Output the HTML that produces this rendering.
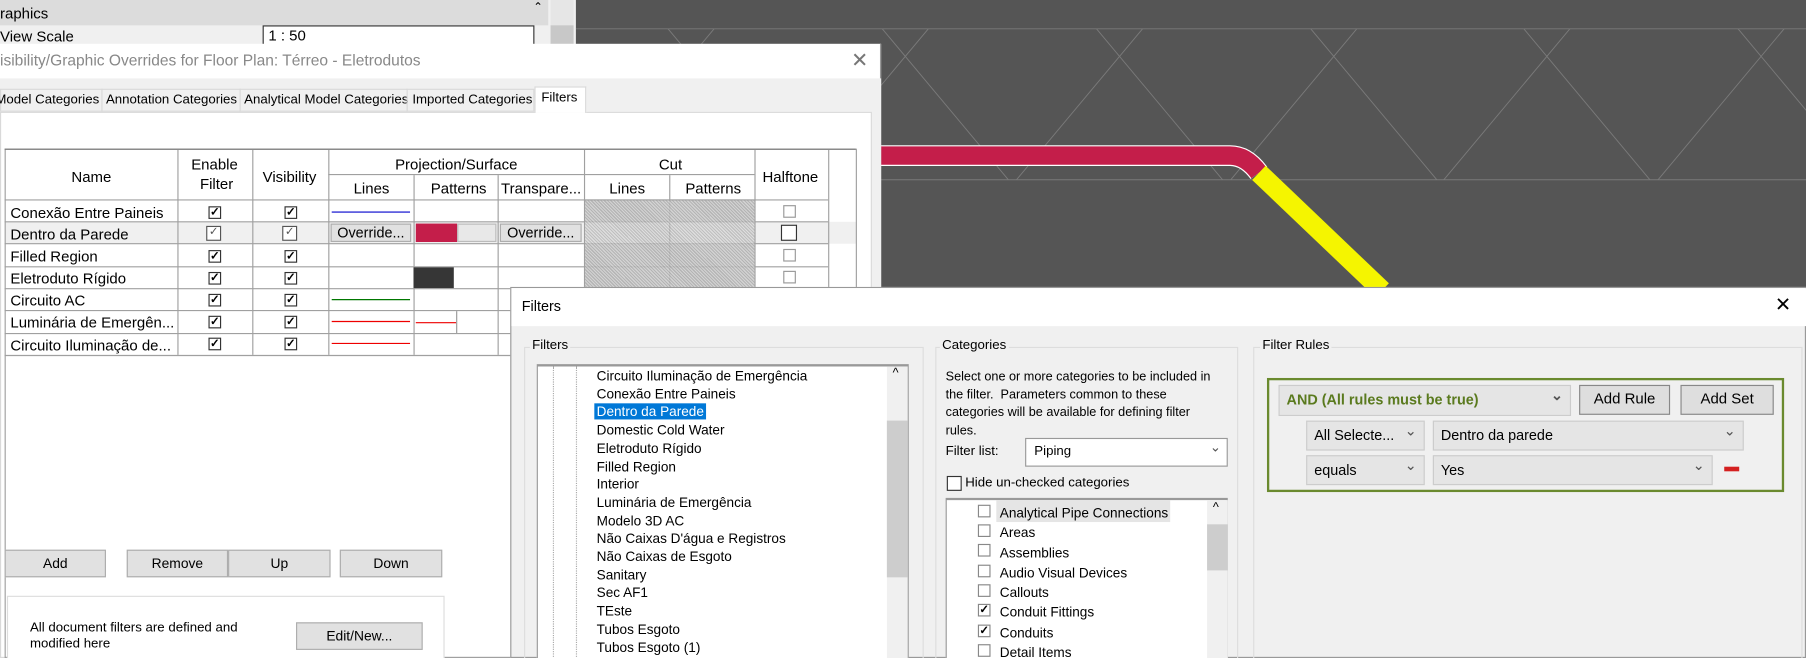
<!DOCTYPE html>
<html><head><meta charset="utf-8"><style>
*{box-sizing:border-box;margin:0;padding:0}
body{width:1806px;height:658px;overflow:hidden;background:#555;font-family:"Liberation Sans",sans-serif;font-size:12px;color:#000}
#w{position:absolute;left:0;top:0;width:1568px;height:571px;transform:scale(1.15179,1.15236);transform-origin:0 0;overflow:hidden}
.a{position:absolute}
.t{position:absolute;white-space:nowrap}
.btn{position:absolute;background:#e1e1e1;border:1px solid #adadad;text-align:center;line-height:22px}
.cb{position:absolute;width:11px;height:11px;border:1px solid #333;background:#fff;font-size:10px;line-height:9px;text-align:center;font-weight:bold}
.hb{position:absolute;width:11px;height:11px;border:1px solid #999;background:#fff}
.sel{position:absolute;background:#e5e5e5;border:1px solid #ccc;padding-left:6px;line-height:24px}
.sel:after{content:"⌄";position:absolute;right:6px;top:-4px;color:#555}
.hatch{background:repeating-linear-gradient(45deg,#aaa 0 1px,#d6d6d6 1px 2px)}
</style></head><body><div id="w">
<svg class="a" style="left:0;top:0" width="1568" height="571">
<g stroke="#7a7a7a" stroke-width="0.8" fill="none">
<line x1="500" y1="25" x2="1568" y2="25"/><line x1="500" y1="156" x2="1568" y2="156"/>
<path d="M395 25 L504.5 156 M435 25 L325.5 156 M580 25 L689.5 156 M620 25 L510.5 156 M766 25 L875.5 156 M806 25 L696.5 156 M952 25 L1061.5 156 M992 25 L882.5 156 M1138 25 L1247.5 156 M1178 25 L1068.5 156 M1323 25 L1432.5 156 M1363 25 L1253.5 156 M1509 25 L1618.5 156 M1549 25 L1439.5 156"/>
</g>
<path d="M740 135 L1068 135 Q1082 135 1093 150" stroke="#fff" stroke-width="18" fill="none"/>
<path d="M740 135 L1068 135 Q1082 135 1093 150" stroke="#c41e4a" stroke-width="16" fill="none"/>
<line x1="1093" y1="150" x2="1200" y2="252" stroke="#f5f500" stroke-width="17"/>
</svg>
<!-- properties -->
<div class="a" style="left:0;top:0;width:500px;height:40px;background:#f0f0f0"></div>
<div class="a" style="left:0;top:0;width:476px;height:22px;background:#dcdcdc"></div>
<div class="t" style="left:0;top:4px;font-size:13px">raphics</div>
<div class="t" style="left:463px;top:1px;font-size:10px">⌃</div>
<div class="a" style="left:478px;top:0;width:20px;height:40px;background:#e6e6e6"></div>
<div class="a" style="left:478px;top:22px;width:20px;height:18px;background:#c8c8c8"></div>
<div class="t" style="left:0;top:24px;font-size:13px">View Scale</div>
<div class="a" style="left:228px;top:22px;width:236px;height:18px;border:1px solid #333;background:#fff;padding-left:4px;font-size:13px;line-height:16px">1 : 50</div>
<!-- VG dialog -->
<div class="a" style="left:0;top:38px;width:765px;height:533px;background:#fff;border-right:1px solid #999"></div>
<div class="t" style="left:0;top:45px;font-size:13.5px;color:#888">isibility/Graphic Overrides for Floor Plan: Térreo - Eletrodutos</div>
<div class="t" style="left:739px;top:42px;font-size:18px;color:#777">✕</div>
<div class="a" style="left:0;top:68px;width:765px;height:503px;background:#f0f0f0"></div>
<div class="a" style="left:0;top:97px;width:757px;height:474px;background:#fff;border:1px solid #d9d9d9"></div>
<div class="a" style="left:0;top:77px;width:464px;height:20px;background:#f0f0f0;border:1px solid #d9d9d9"></div>
<div class="t" style="left:-4px;top:81px;font-size:11.5px">Model Categories</div>
<div class="a" style="left:88px;top:77px;width:1px;height:20px;background:#d9d9d9"></div>
<div class="t" style="left:92px;top:81px;font-size:11.5px">Annotation Categories</div>
<div class="a" style="left:208px;top:77px;width:1px;height:20px;background:#d9d9d9"></div>
<div class="t" style="left:212px;top:81px;font-size:11.5px">Analytical Model Categories</div>
<div class="a" style="left:353px;top:77px;width:1px;height:20px;background:#d9d9d9"></div>
<div class="t" style="left:358px;top:81px;font-size:11.5px">Imported Categories</div>
<div class="a" style="left:464px;top:75px;width:45px;height:23px;background:#fff;border:1px solid #d9d9d9;border-bottom:none"></div>
<div class="t" style="left:470px;top:79px;font-size:11.5px">Filters</div>
<!-- table -->
<svg class="a" style="left:0;top:0" width="765" height="571">
<rect x="507" y="173" width="148" height="135" fill="#ccc"/>
<rect x="4.5" y="192.5" width="739" height="19" fill="#f0f0f0"/>
<g stroke="#a0a0a0" fill="none">
<rect x="4.5" y="129.5" width="739" height="441"/>
<line x1="4" y1="129.5" x2="743" y2="129.5" stroke="#777"/>
<path d="M4 173.5H719 M4 192.5H719 M4 211.5H719 M4 231.5H719 M4 250.5H719 M4 269.5H719 M4 289.5H719 M4 308.5H719 M285 151.5H655"/>
<path d="M154.5 130V308 M219.5 130V308 M285.5 130V308 M359.5 152V308 M432.5 152V308 M507.5 130V308 M581.5 152V308 M655.5 130V308 M719.5 130V308"/>
</g>
<line x1="288" y1="184" x2="356" y2="184" stroke="#00c"/>
<line x1="288" y1="260" x2="356" y2="260" stroke="#070"/>
<line x1="288" y1="279" x2="356" y2="279" stroke="#e00"/>
<line x1="361" y1="280" x2="396" y2="280" stroke="#e00"/>
<line x1="396.5" y1="270" x2="396.5" y2="289" stroke="#999"/>
<line x1="288" y1="298" x2="356" y2="298" stroke="#e00"/>
<rect x="359" y="232" width="35" height="18" fill="#363636"/>
</svg>
<div class="a hatch" style="left:508px;top:174px;width:147px;height:134px;opacity:.7"></div>
<div class="t" style="left:62px;top:146px;font-size:13px">Name</div>
<div class="t" style="left:166px;top:134px;font-size:13px;text-align:center;line-height:17px">Enable<br>&nbsp;Filter</div>
<div class="t" style="left:228px;top:146px;font-size:13px">Visibility</div>
<div class="t" style="left:343px;top:135px;font-size:13px">Projection/Surface</div>
<div class="t" style="left:572px;top:135px;font-size:13px">Cut</div>
<div class="t" style="left:662px;top:146px;font-size:13px">Halftone</div>
<div class="t" style="left:307px;top:156px;font-size:13px">Lines</div>
<div class="t" style="left:374px;top:156px;font-size:13px">Patterns</div>
<div class="t" style="left:435px;top:156px;font-size:13px">Transpare...</div>
<div class="t" style="left:529px;top:156px;font-size:13px">Lines</div>
<div class="t" style="left:595px;top:156px;font-size:13px">Patterns</div>
<div class="t" style="left:9px;top:175px;font-size:13px;line-height:19.1px">Conexão Entre Paineis<br>Dentro da Parede<br>Filled Region<br>Eletroduto Rígido<br>Circuito AC<br>Luminária de Emergên...<br>Circuito Iluminação de...</div>
<div class="cb" style="left:181px;top:179px">✓</div><div class="cb" style="left:247px;top:179px">✓</div>
<div class="cb" style="left:179px;top:196px;width:13px;height:13px;border-color:#555;font-weight:normal;color:#555">✓</div><div class="cb" style="left:245px;top:196px;width:13px;height:13px;border-color:#555;font-weight:normal;color:#555">✓</div>
<div class="cb" style="left:181px;top:217px">✓</div><div class="cb" style="left:247px;top:217px">✓</div>
<div class="cb" style="left:181px;top:236px">✓</div><div class="cb" style="left:247px;top:236px">✓</div>
<div class="cb" style="left:181px;top:255px">✓</div><div class="cb" style="left:247px;top:255px">✓</div>
<div class="cb" style="left:181px;top:274px">✓</div><div class="cb" style="left:247px;top:274px">✓</div>
<div class="cb" style="left:181px;top:293px">✓</div><div class="cb" style="left:247px;top:293px">✓</div>
<div class="hb" style="left:680px;top:178px"></div>
<div class="hb" style="left:678px;top:195px;width:14px;height:14px;border-color:#333"></div>
<div class="hb" style="left:680px;top:216px"></div><div class="hb" style="left:680px;top:235px"></div>
<div class="btn" style="left:287px;top:194px;width:70px;height:16px;line-height:14px;font-size:12.5px">Override...</div>
<div class="a" style="left:361px;top:194px;width:36px;height:16px;background:#c41e4a"></div>
<div class="a" style="left:397px;top:194px;width:34px;height:16px;background:#e8e8e8;border:1px solid #bbb"></div>
<div class="btn" style="left:434px;top:194px;width:71px;height:16px;line-height:14px;font-size:12.5px">Override...</div>
<div class="btn" style="left:4px;top:477px;width:88px;height:24px">Add</div>
<div class="btn" style="left:110px;top:477px;width:88px;height:24px">Remove</div>
<div class="btn" style="left:198px;top:477px;width:89px;height:24px">Up</div>
<div class="btn" style="left:295px;top:477px;width:89px;height:24px">Down</div>
<div class="a" style="left:6px;top:517px;width:380px;height:60px;border:1px solid #ddd;background:#fff"></div>
<div class="t" style="left:26px;top:538px;font-size:11.5px;line-height:14px">All document filters are defined and<br>modified here</div>
<div class="btn" style="left:257px;top:540px;width:110px;height:24px">Edit/New...</div>
<!-- Filters dialog -->
<div class="a" style="left:443px;top:249px;width:1125px;height:322px;background:#f0f0f0;border:1px solid #999"></div>
<div class="a" style="left:444px;top:250px;width:1124px;height:33px;background:#fff"></div>
<div class="t" style="left:453px;top:259px;font-size:12.5px">Filters</div>
<div class="t" style="left:1541px;top:255px;font-size:17px">✕</div>
<div class="a" style="left:455px;top:301px;width:347px;height:280px;border:1px solid #ddd"></div>
<div class="t" style="left:460px;top:294px;background:#f0f0f0;padding:0 2px;font-size:11.5px">Filters</div>
<div class="a" style="left:812px;top:301px;width:263px;height:280px;border:1px solid #ddd"></div>
<div class="t" style="left:816px;top:294px;background:#f0f0f0;padding:0 2px;font-size:11.5px">Categories</div>
<div class="a" style="left:1088px;top:301px;width:477px;height:280px;border:1px solid #ddd"></div>
<div class="t" style="left:1094px;top:294px;background:#f0f0f0;padding:0 2px;font-size:11.5px">Filter Rules</div>
<div class="a" style="left:466px;top:316px;width:323px;height:260px;background:#fff;border:1px solid #999;border-top:2px solid #999"></div>
<div class="a" style="left:480px;top:318px;height:260px;border-left:1px dotted #aaa"></div>
<div class="a" style="left:500px;top:318px;height:260px;border-left:1px dotted #aaa"></div>
<div class="t" style="left:518px;top:319px;font-size:11.8px;line-height:15.7px">Circuito Iluminação de Emergência<br>Conexão Entre Paineis<br><span style="background:#0078d7;color:#fff;padding:0 2px;margin-left:-2px">Dentro da Parede</span><br>Domestic Cold Water<br>Eletroduto Rígido<br>Filled Region<br>Interior<br>Luminária de Emergência<br>Modelo 3D AC<br>Não Caixas D'água e Registros<br>Não Caixas de Esgoto<br>Sanitary<br>Sec AF1<br>TEste<br>Tubos Esgoto<br>Tubos Esgoto (1)</div>
<div class="a" style="left:770px;top:318px;width:18px;height:260px;background:#f0f0f0"></div>
<div class="a" style="left:770px;top:365px;width:18px;height:136px;background:#cdcdcd"></div>
<div class="t" style="left:775px;top:318px;font-size:11px">^</div>
<div class="t" style="left:821px;top:320px;font-size:11px;line-height:15.5px">Select one or more categories to be included in<br>the filter.&nbsp; Parameters common to these<br>categories will be available for defining filter<br>rules.</div>
<div class="t" style="left:821px;top:386px;font-size:11.5px">Filter list:</div>
<div class="a" style="left:890px;top:380px;width:176px;height:25px;background:#fff;border:1px solid #999;padding-left:7px;line-height:23px;font-size:11.5px">Piping<span style="position:absolute;right:5px;top:-3px;color:#555">⌄</span></div>
<div class="a" style="left:822px;top:413px;width:13px;height:13px;border:1px solid #333;background:#fff"></div>
<div class="t" style="left:838px;top:413px;font-size:11.5px">Hide un-checked categories</div>
<div class="a" style="left:821px;top:432px;width:245px;height:145px;background:#fff;border:1px solid #999;border-top:2px solid #999"></div>
<div class="a" style="left:865px;top:434px;width:151px;height:19px;background:#e5e5e5"></div>
<div class="t" style="left:868px;top:437px;font-size:11.8px;line-height:17.3px">Analytical Pipe Connections<br>Areas<br>Assemblies<br>Audio Visual Devices<br>Callouts<br>Conduit Fittings<br>Conduits<br>Detail Items</div>
<div class="hb" style="left:849px;top:438px;border-color:#888"></div><div class="hb" style="left:849px;top:455px;border-color:#888"></div><div class="hb" style="left:849px;top:472px;border-color:#888"></div><div class="hb" style="left:849px;top:490px;border-color:#888"></div><div class="hb" style="left:849px;top:507px;border-color:#888"></div>
<div class="cb" style="left:849px;top:524px;border-color:#888">✓</div><div class="cb" style="left:849px;top:542px;border-color:#888">✓</div><div class="hb" style="left:849px;top:559px;border-color:#888"></div>
<div class="a" style="left:1048px;top:434px;width:18px;height:143px;background:#f0f0f0"></div>
<div class="a" style="left:1048px;top:455px;width:18px;height:40px;background:#cdcdcd"></div>
<div class="t" style="left:1053px;top:435px;font-size:11px">^</div>
<div class="a" style="left:1100px;top:328px;width:449px;height:99px;border:2px solid #6a8a2e"></div>
<div class="sel" style="left:1110px;top:334px;width:254px;height:27px;color:#5a7a1e;font-weight:bold;font-size:12.5px">AND (All rules must be true)</div>
<div class="btn" style="left:1371px;top:334px;width:79px;height:26px;background:#dedede;border-color:#888;font-size:13px">Add Rule</div>
<div class="btn" style="left:1459px;top:334px;width:81px;height:26px;background:#dedede;border-color:#888;font-size:13px">Add Set</div>
<div class="sel" style="left:1134px;top:365px;width:103px;height:26px;font-size:12.5px">All Selecte...</div>
<div class="sel" style="left:1244px;top:365px;width:270px;height:26px;font-size:12.5px">Dentro da parede</div>
<div class="sel" style="left:1134px;top:395px;width:103px;height:26px;font-size:12.5px">equals</div>
<div class="sel" style="left:1244px;top:395px;width:243px;height:26px;font-size:12.5px">Yes</div>
<div class="a" style="left:1497px;top:405px;width:13px;height:4px;background:#d42020"></div>
</div></body></html>
